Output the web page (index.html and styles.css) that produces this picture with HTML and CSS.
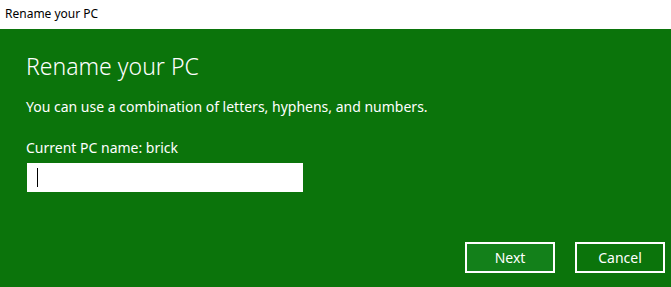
FILE: index.html
```html
<!DOCTYPE html>
<html>
<head>
<meta charset="utf-8">
<link rel="stylesheet" href="styles.css">
</head>
<body>
<div class="window">
  <div class="titlebar">Rename your PC</div>
  <div class="content">
    <h1 class="heading">Rename your PC</h1>
    <p class="desc">You can use a combination of letters, hyphens, and numbers.</p>
    <p class="current">Current PC name: brick</p>
    <div class="input"><span class="caret"></span></div>
    <div class="buttons">
      <button class="btn btn-primary">Next</button>
      <button class="btn">Cancel</button>
    </div>
  </div>
</div>
</body>
</html>
```
FILE: styles.css
```css
html, body {
  margin: 0;
  padding: 0;
}
body {
  width: 671px;
  height: 287px;
  overflow: hidden;
  font-family: "Noto Sans", "Open Sans", sans-serif;
}
.window {
  display: flex;
  flex-direction: column;
  height: 287px;
}
.titlebar {
  height: 29px;
  background: #ffffff;
  color: #000000;
  font-size: 12px;
  line-height: 28px;
  padding-left: 5px;
  box-sizing: border-box;
}
.content {
  flex: 1;
  background: #0b740b;
  color: #ffffff;
  display: flex;
  flex-direction: column;
  padding: 0 6px 0 26px;
}
.heading {
  margin: 22px 0 0 0;
  font-size: 23px;
  font-weight: 300;
  line-height: 30px;
}
.desc {
  margin: 16px 0 0 0;
  font-size: 14px;
  line-height: 20px;
}
.current {
  margin: 21px 0 0 0;
  font-size: 14px;
  line-height: 20px;
}
.input {
  margin: 5px 0 0 1px;
  width: 276px;
  height: 29px;
  background: #ffffff;
  display: flex;
  align-items: center;
  padding-left: 10px;
  box-sizing: border-box;
}
.caret {
  width: 1px;
  height: 19px;
  background: #000000;
}
.buttons {
  margin-top: 50px;
  display: flex;
  justify-content: flex-end;
  gap: 20px;
}
.btn {
  width: 90px;
  height: 31px;
  border: 2px solid #ffffff;
  background: transparent;
  color: #ffffff;
  font-family: "Noto Sans", "Open Sans", sans-serif;
  font-size: 14px;
  padding: 0;
}
.btn-primary {
  background: #13801a;
}
```
